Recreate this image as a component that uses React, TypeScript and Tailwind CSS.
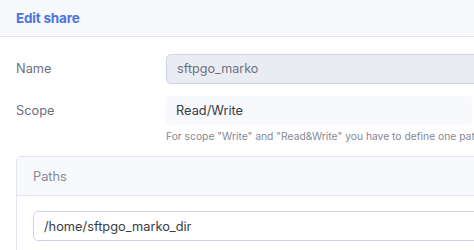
const App = () => {
  return (
    <div className="w-[474px] h-[250px] overflow-hidden bg-white" style={{ fontFamily: 'Inter, "Liberation Sans", sans-serif' }}>
      <div className="w-[600px]">
        <div className="h-[37px] bg-[#f8f9fc] border-b border-[#e3e6f0] px-4 flex items-center">
          <h6 className="text-[13.5px] font-bold text-[#4e73df] tracking-[-0.2px]">Edit share</h6>
        </div>

        <div className="pl-4 pt-[17px]">
          <div className="flex items-center">
            <label className="w-[150px] text-[12.8px] text-[#6e707e]">Name</label>
            <div className="flex-1 h-[30px] bg-[#eaecf4] border border-[#d1d3e2] rounded-[5px] pl-[10px] flex items-center text-[12.6px] text-[#6e707e]">
              sftpgo_marko
            </div>
          </div>

          <div className="flex items-center mt-[12px]">
            <label className="w-[150px] text-[12.8px] text-[#6e707e]">Scope</label>
            <div className="w-[306px] h-[29px] bg-[#f8f9fc] rounded-[4px] pl-[10px] flex items-center text-[12.8px] text-[#3a3b45]">
              Read/Write
            </div>
          </div>

          <p className="ml-[150px] mt-[4px] text-[10.3px] text-[#858796] whitespace-nowrap">
            For scope "Write" and "Read&amp;Write" you have to define one path
          </p>

          <div className="mt-[12px] border border-[#e3e6f0] rounded-[5px] overflow-hidden">
            <div className="h-[39px] bg-[#f8f9fc] border-b border-[#e3e6f0] pl-4 flex items-center text-[12.8px] text-[#858796]">
              Paths
            </div>
            <div className="pl-4 pt-[15px] pb-4 bg-white">
              <div className="h-[30px] bg-white border border-[#d1d3e2] rounded-[5px] pl-[10px] flex items-center text-[12.8px] text-[#3a3b45]">
                /home/sftpgo_marko_dir
              </div>
            </div>
          </div>
        </div>
      </div>
    </div>
  );
};

export default App;
